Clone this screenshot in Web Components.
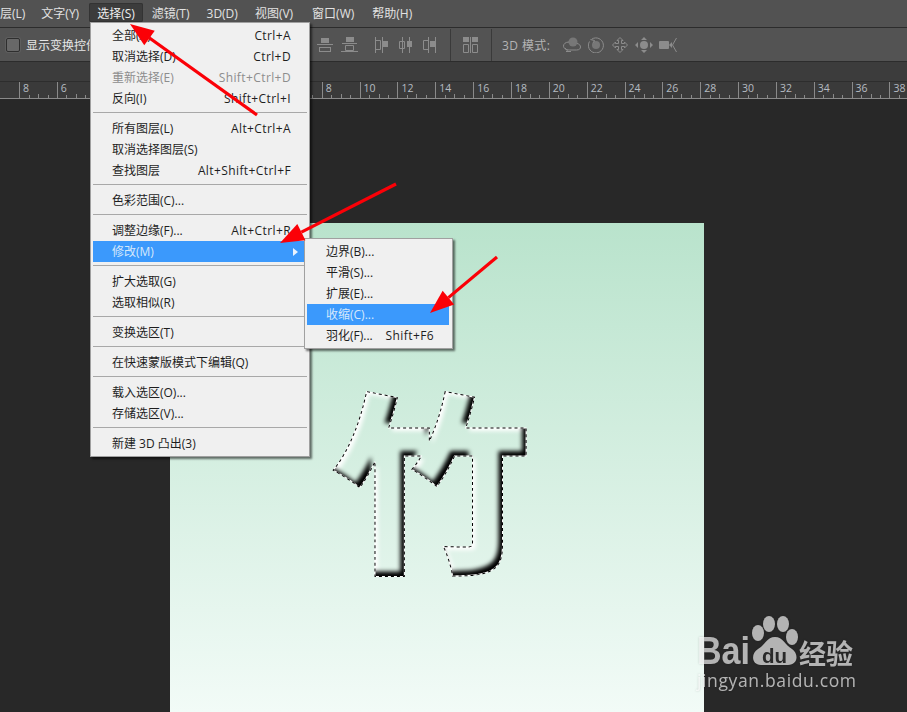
<!DOCTYPE html>
<html lang="zh"><head><meta charset="utf-8"><title>Photoshop</title>
<style>
html,body{margin:0;padding:0;height:100%;overflow:hidden;background:#282828}
body{font:12px "Open Sans","Noto Sans CJK SC",sans-serif;}
</style></head><body>
<ps-app>
  <ps-menubar></ps-menubar>
  <ps-options></ps-options>
  <ps-tabstrip></ps-tabstrip>
  <ps-ruler></ps-ruler>
  <ps-canvas></ps-canvas>
  <ps-menu id="m1" style="left:90px;top:22px;width:220px">
    <ps-item shortcut="Ctrl+A">全部(A)</ps-item>
    <ps-item shortcut="Ctrl+D">取消选择(D)</ps-item>
    <ps-item shortcut="Shift+Ctrl+D" disabled>重新选择(E)</ps-item>
    <ps-item shortcut="Shift+Ctrl+I">反向(I)</ps-item>
    <ps-sep></ps-sep>
    <ps-item shortcut="Alt+Ctrl+A">所有图层(L)</ps-item>
    <ps-item>取消选择图层(S)</ps-item>
    <ps-item shortcut="Alt+Shift+Ctrl+F">查找图层</ps-item>
    <ps-sep></ps-sep>
    <ps-item>色彩范围(C)...</ps-item>
    <ps-sep></ps-sep>
    <ps-item shortcut="Alt+Ctrl+R">调整边缘(F)...</ps-item>
    <ps-item active sub>修改(M)</ps-item>
    <ps-sep></ps-sep>
    <ps-item>扩大选取(G)</ps-item>
    <ps-item>选取相似(R)</ps-item>
    <ps-sep></ps-sep>
    <ps-item>变换选区(T)</ps-item>
    <ps-sep></ps-sep>
    <ps-item>在快速蒙版模式下编辑(Q)</ps-item>
    <ps-sep></ps-sep>
    <ps-item>载入选区(O)...</ps-item>
    <ps-item>存储选区(V)...</ps-item>
    <ps-sep></ps-sep>
    <ps-item>新建 3D 凸出(3)</ps-item>
  </ps-menu>
  <ps-menu id="m2" style="left:304px;top:238px;width:149px">
    <ps-item>边界(B)...</ps-item>
    <ps-item>平滑(S)...</ps-item>
    <ps-item>扩展(E)...</ps-item>
    <ps-item active>收缩(C)...</ps-item>
    <ps-item shortcut="Shift+F6">羽化(F)...</ps-item>
  </ps-menu>
  <ps-arrows></ps-arrows>
  <ps-watermark></ps-watermark>
</ps-app>
<script>
const FONT='"Open Sans","Noto Sans CJK SC",sans-serif';
function def(name,css,html,init){
  customElements.define(name,class extends HTMLElement{
    constructor(){super();const r=this.attachShadow({mode:'open'});
      r.innerHTML='<style>'+css+'</style>'+(typeof html==='function'?html(this):html);}
    connectedCallback(){if(init)init(this);}
  });
}
def('ps-app',`:host{display:flex;flex-direction:column;position:relative;width:907px;height:712px;overflow:hidden;background:#282828;font:12px ${FONT}}`,'<slot></slot>');

def('ps-menubar',`:host{display:flex;flex:none;background:#525252;border-bottom:1px solid #2c2c2c;align-items:flex-start;color:#e2e2e2;font-size:12px;padding-top:3px;height:24px}
span{display:block;height:19px;line-height:19px;padding:1px 8px 0;box-sizing:border-box;white-space:nowrap}
span.first{padding-left:0;}
span.on{background:#3c3c3c;border-radius:2px;box-shadow:inset 0 0 0 1px #333;color:#eee}`,
`<span class="first">层(L)</span><span>文字(Y)</span><span class="on" style="margin-left:2px">选择(S)</span><span style="margin-left:1px">滤镜(T)</span><span style="margin-left:1px">3D(D)</span><span style="margin-left:1px">视图(V)</span><span style="margin-left:3px">窗口(W)</span><span style="margin-left:2px">帮助(H)</span>`);

const I='stroke="#8c8c8c" fill="none" stroke-width="1"';
const B='fill="#8c8c8c"';
def('ps-options',`:host{display:flex;flex:none;height:33px;background:#535353;border-bottom:1px solid #2c2c2c;align-items:center;color:#e6e6e6;font-size:12px}
.cb{width:12px;height:12px;margin-left:6px;border:1px solid #2e2e2e;border-radius:2px;background:#686868;box-shadow:0 0 0 1px #5e5e5e}
.lb{margin-left:6px;white-space:nowrap;width:72px}
svg{display:block;flex:none}
.sep{width:1px;height:32px;background:#3a3a3a;flex:none}
.t{color:#b4b4b4;white-space:nowrap;width:46px;margin-left:10px;letter-spacing:.4px}`,
`<div class="cb"></div><div class="lb">显示变换控件</div>
<svg style="margin-left:219px" width="16" height="16" viewBox="0 0 16 16"><path d="M0 7.5h16" ${I}/><rect x="4" y="1" width="8" height="5" ${B}/><rect x="2.5" y="10.5" width="11" height="4" ${I}/><path d="M0 7.5h16" ${I}/></svg>
<svg style="margin-left:8px" width="17" height="16" viewBox="0 0 17 16"><rect x="5" y="0" width="8" height="5" ${B}/><path d="M4.5 8.5h8v5h-8zM0 14.5h17M1 6.5h15" ${I}/></svg>
<svg style="margin-left:17px" width="13" height="16" viewBox="0 0 13 16"><path d="M.5 0v16M7.5 0v16M.5 3.5h5v9h-5" ${I}/><rect x="8" y="4" width="5" height="6" ${B}/></svg>
<svg style="margin-left:11px" width="13" height="16" viewBox="0 0 13 16"><path d="M3.5 0v16M10.5 0v16M.5 4.5h5v7h-5z" ${I}/><rect x="8" y="4" width="5" height="6" ${B}/></svg>
<svg style="margin-left:11px" width="13" height="16" viewBox="0 0 13 16"><path d="M5.5 0v16M12.5 0v16M5.5 3.5h-5v9h5" ${I}/><rect x="7" y="4" width="5" height="6" ${B}/></svg>
<div class="sep" style="margin-left:14px"></div>
<svg style="margin-left:12px" width="15" height="16" viewBox="0 0 15 16"><rect x="0" y="0" width="6" height="5" ${B}/><rect x="9" y="0" width="6" height="5" ${B}/><path d="M.5 7.5h5v8h-5zM9.5 7.5h5v8h-5zM7.5 0v16" ${I}/></svg>
<div class="sep" style="margin-left:13px"></div>
<div class="t">3D 模式:</div>
<svg style="margin-left:15px" width="18" height="16" viewBox="0 0 18 16"><circle cx="10" cy="5" r="4.500" fill="#777"/><path d="M6 5C2.500 5 .5 7 .5 9s2 4 6 4h7c3 0 4-1.500 4-3s-1-3-3.500-3.500M2 11l3 3.500M3 14.500h5" ${I}/></svg>
<svg style="margin-left:7px" width="16" height="16" viewBox="0 0 16 16"><path d="M4 2A7.500 7.500 0 1 1 1.500 4.500" ${I}/><circle cx="8" cy="8" r="4" fill="#777"/><path d="M2.500 2.500l4 1-1 2" ${I}/></svg>
<svg style="margin-left:8px" width="16" height="16" viewBox="0 0 16 16"><path d="M8 .5L11 3.500H9.500V6.500H12.500V5L15.500 8L12.500 11V9.500H9.500V12.500H11L8 15.500L5 12.500H6.500V9.500H3.500V11L.5 8L3.500 5V6.500H6.500V3.500H5Z" ${I}/></svg>
<svg style="margin-left:7px" width="18" height="16" viewBox="0 0 18 16"><circle cx="9" cy="8" r="4" ${B}/><path d="M9 0l3 3H6zM9 16l-3-3h6zM0 8l3-3v6zM18 8l-3 3V5z" ${B}/></svg>
<svg style="margin-left:6px" width="18" height="16" viewBox="0 0 18 16"><rect x="0" y="4" width="10" height="8" rx="1" ${B}/><path d="M10 8l3-3v6z" ${B}/><path d="M17.500 1L13.500 8l4 7" ${I}/></svg>`);

def('ps-tabstrip',`:host{display:block;flex:none;height:19px;background:#3c3c3c}`,'');

def('ps-ruler',`:host{display:flex;flex:none;height:16px;background:#3a3a3a;border-top:1px solid #2d2d2d;border-bottom:1px solid #8a8a8a;overflow:hidden;color:#b6bcc2;font-size:10.500px;line-height:13px}
div{flex:none;width:37.850px;height:16px;box-sizing:border-box;border-left:1px solid #8a8a8a;padding-left:3px;
background-image:linear-gradient(#8a8a8a,#8a8a8a),linear-gradient(#8a8a8a,#8a8a8a),linear-gradient(#8a8a8a,#8a8a8a);
background-size:1px 3px,1px 4px,1px 3px;background-position:8.500px 100%,18px 100%,27.500px 100%;background-repeat:no-repeat}
div.f{width:19px;padding:0;border:0;background:none}`,
'<div class="f"></div>'+[8,6,'','','','','','',8,10,12,14,16,18,20,22,24,26,28,30,32,34,36,38].map(n=>`<div>${n}</div>`).join(''));

const GF='"Noto Sans CJK SC",sans-serif';
def('ps-canvas',`:host{display:block;flex:1;min-height:0;padding:124px 0 0 170px;overflow:hidden}
.doc{width:534px;height:489px;background:linear-gradient(#b9e3cc,#f2fbf7)}
svg{display:block}
text{font:900 200px ${GF}}`,
`<div class="doc"><svg width="534" height="489" viewBox="0 0 534 489">
<defs>
<filter id="bev" x="-10%" y="-10%" width="120%" height="120%" color-interpolation-filters="sRGB">
 <feGaussianBlur in="SourceAlpha" stdDeviation="2.200" result="b"/>
 <feOffset in="b" dx="-4" dy="-5" result="o1"/>
 <feFlood flood-color="#000"/><feComposite in2="o1" operator="out"/><feComposite in2="SourceAlpha" operator="in" result="dark"/>
 <feOffset in="b" dx="3" dy="3" result="o2"/>
 <feFlood flood-color="#fff"/><feComposite in2="o2" operator="out"/><feComposite in2="SourceAlpha" operator="in" result="light"/>
 <feMerge><feMergeNode in="light"/><feMergeNode in="dark"/></feMerge>
</filter>
<text id="g" x="161" y="334" textLength="200">竹</text>
</defs>
<g transform="matrix(1 0 0 .974 0 9.200)">
<use href="#g" filter="url(#bev)" fill="#000"/>
<use href="#g" fill="none" stroke="#fff" stroke-width="1"/>
<use href="#g" fill="none" stroke="#000" stroke-width="1" stroke-dasharray="3 3"/>
</g>
</svg></div>`);

def('ps-menu',`:host{display:block;position:absolute;box-sizing:border-box;padding:2px 3px;background:#f0f0f0;border:1px solid #a0a0a0;box-shadow:2px 2px 2px rgba(0,0,0,.55);color:#1e1e1e;font-size:12px}`,'<slot></slot>');
def('ps-sep',`:host{display:block;height:9px;padding-top:3px;box-sizing:border-box}
div{height:1px;background:#a8a8a8;margin:0 -1px}`,'<div></div>');
def('ps-item',`:host{display:flex;box-sizing:border-box;height:21px;line-height:20px;padding:1px 15px 0 19px;align-items:center;justify-content:space-between;margin:0 0 0 -1px;white-space:nowrap;position:relative}
:host([disabled]){color:#8d8d8d}
:host([active]){background:#3b99fc;color:#d6e8fb}
.sc{letter-spacing:.4px}
.arrow{position:absolute;right:8px;top:7px;width:0;height:0;border-left:5px solid #eaf3fe;border-top:4px solid transparent;border-bottom:4px solid transparent}`,
el=>`<span><slot></slot></span><span class="sc">${el.getAttribute('shortcut')||''}</span>${el.hasAttribute('sub')?'<i class="arrow"></i>':''}`);

function arrow(x1,y1,x2,y2,len,w){
  const d=Math.hypot(x2-x1,y2-y1),ux=(x2-x1)/d,uy=(y2-y1)/d,bx=x2-ux*len,by=y2-uy*len,nx=-uy*w,ny=ux*w;
  return `<path d="M${x1} ${y1}L${bx} ${by}" stroke="#fb0007" stroke-width="3.200"/><path d="M${x2} ${y2}L${bx+nx} ${by+ny}L${bx-nx} ${by-ny}Z" fill="#fb0007"/>`;
}
def('ps-arrows',`:host{display:block;position:absolute;left:0;top:0;width:907px;height:712px;pointer-events:none}svg{display:block}`,
`<svg width="907" height="712" viewBox="0 0 907 712">${arrow(257,115,130,24,24,9)}${arrow(396,184,280,243,24,9)}${arrow(497,257,430,313,24,9)}</svg>`);

def('ps-watermark',`:host{display:block;position:absolute;left:696px;top:613px;width:170px;height:82px;color:rgba(255,255,255,.66);pointer-events:none}
svg{display:block;position:absolute;left:0;top:0;filter:drop-shadow(0 0 1px rgba(0,0,0,.25))}
.bai{font:700 39px/1 "Liberation Sans",sans-serif;fill:currentColor}
.du{font:700 20px/1 "Liberation Sans",sans-serif;fill:#2a2a2a}
.jy{font:700 27px/1 "Noto Sans CJK SC",sans-serif;fill:currentColor}
.url{font:400 17.500px/1 "Open Sans",sans-serif;fill:currentColor}
.p{fill:rgba(255,255,255,.66)}`,
`<svg width="170" height="82" viewBox="0 0 170 82">
<text class="bai" x="1" y="51" textLength="53" lengthAdjust="spacingAndGlyphs">Bai</text>
<g class="p"><ellipse cx="62" cy="20" rx="6" ry="8"/><ellipse cx="73" cy="11" rx="6" ry="8"/><ellipse cx="87" cy="11" rx="6" ry="8"/><ellipse cx="96" cy="24" rx="6" ry="8"/>
<path d="M79 24C71 24 69 32 62 36C55 40 55 52 65 52H92C102 52 103 41 96 36C89 32 87 24 79 24Z"/></g>
<text class="du" x="66" y="50" textLength="25" lengthAdjust="spacingAndGlyphs">du</text>
<text class="jy" x="103" y="51">经验</text>
<text class="url" x="1" y="74" textLength="159">jingyan.baidu.com</text>
</svg>`);
</script>
</body></html>
